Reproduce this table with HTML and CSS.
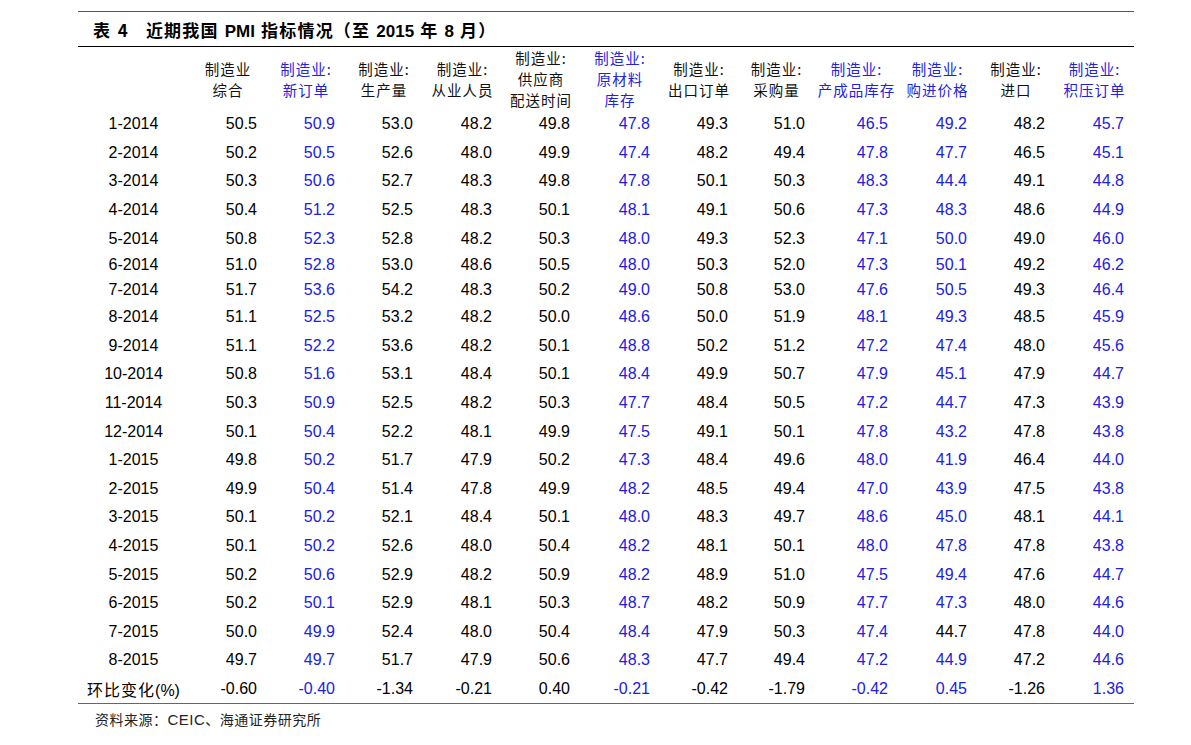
FILE: index.html
```html
<!DOCTYPE html>
<html lang="zh-CN">
<head>
<meta charset="utf-8">
<title>近期我国PMI指标情况</title>
<link rel="stylesheet" href="styles.css">
</head>
<body>
<div class="report">
  <div class="title"><span class="tnum">表 4</span><span class="ttext">近期我国 <b class="lat">PMI</b> 指标情况（至 <b class="lat">2015</b> 年 <b class="lat">8</b> 月）</span></div>
  <table class="pmi">
    <colgroup>
      <col class="c0"><col class="c78"><col class="c78"><col class="c78"><col class="c79"><col class="c78"><col class="c80"><col class="c78"><col class="c77"><col class="c83"><col class="c79"><col class="c78"><col class="c79">
    </colgroup>
    <thead>
      <tr>
        <th></th>
        <th>制造业<br>综合</th>
        <th class="b">制造业:<br>新订单</th>
        <th>制造业:<br>生产量</th>
        <th>制造业:<br>从业人员</th>
        <th>制造业:<br>供应商<br>配送时间</th>
        <th class="b">制造业:<br>原材料<br>库存</th>
        <th>制造业:<br>出口订单</th>
        <th>制造业:<br>采购量</th>
        <th class="b">制造业:<br>产成品库存</th>
        <th class="b">制造业:<br>购进价格</th>
        <th>制造业:<br>进口</th>
        <th class="b">制造业:<br>积压订单</th>
      </tr>
    </thead>
    <tbody id="rows"></tbody>
  </table>
  <div class="source">资料来源：<span class="lat">CEIC</span>、海通证券研究所</div>
</div>
<script src="app.js"></script>
</body>
</html>
```

FILE: styles.css
```css
html, body {
  margin: 0;
  padding: 0;
  background: #ffffff;
}
body {
  font-family: "Liberation Sans", Arial, "Noto Sans CJK SC", sans-serif;
  color: #000;
}
.report {
  margin: 11px 0 0 78px;
  width: 1056px;
}
.title {
  border-top: 1.3px solid #555;
  border-bottom: 1.4px solid #000;
  height: 36px;
  display: flex;
  align-items: center;
  font-family: "Noto Sans CJK SC", sans-serif;
  font-weight: 700;
  font-size: 17px;
  padding-left: 15px;
  box-sizing: border-box;
}
.title .tnum {
  margin-right: 18px;
  word-spacing: 4px;
}
.title .ttext {
  letter-spacing: 1.2px;
  word-spacing: 1px;
}
.lat {
  font-family: "Liberation Sans", Arial, sans-serif;
}
.title .ttext .lat {
  letter-spacing: 0;
}
.pmi {
  border-collapse: collapse;
  table-layout: fixed;
  width: 1056px;
  border-bottom: 1.3px solid #666;
}
.c0 { width: 111px; }
.c77 { width: 77px; }
.c78 { width: 78px; }
.c79 { width: 79px; }
.c80 { width: 80px; }
.c83 { width: 83px; }
.pmi th {
  height: 63px;
  padding: 0;
  font-family: "Noto Sans CJK SC", sans-serif;
  font-weight: 400;
  font-size: 14.5px;
  line-height: 21px;
  letter-spacing: 1px;
  text-align: center;
  vertical-align: middle;
  color: #111;
  white-space: nowrap;
}
.pmi th.b { color: #2222dd; }
.pmi td {
  height: 28.6px;
  padding: 0 10px 0 0;
  font-size: 16px;
  text-align: right;
  vertical-align: middle;
  white-space: nowrap;
}
.pmi tr.short td { height: 25px; }
.pmi td.lbl {
  text-align: center;
  padding: 0;
}
.pmi td.cn {
  font-family: "Noto Sans CJK SC", "Liberation Sans", sans-serif;
  letter-spacing: 1px;
}
.pmi td.cn .lat { font-family: "Liberation Sans", Arial, sans-serif; letter-spacing: 0; }
.pmi td.b { color: #2020e0; }
.pmi td.b.k { color: #000; }
.source {
  font-family: "Noto Sans CJK SC", sans-serif;
  font-size: 14px;
  color: #222;
  padding: 5px 0 0 17px;
  line-height: 20px;
  letter-spacing: 0.5px;
}
.source .lat { font-size: 15px; }
```

FILE: app.js
```js
var data = [
  ["1-2014", "50.5 50.9 53.0 48.2 49.8 47.8 49.3 51.0 46.5 49.2 48.2 45.7"],
  ["2-2014", "50.2 50.5 52.6 48.0 49.9 47.4 48.2 49.4 47.8 47.7 46.5 45.1"],
  ["3-2014", "50.3 50.6 52.7 48.3 49.8 47.8 50.1 50.3 48.3 44.4 49.1 44.8"],
  ["4-2014", "50.4 51.2 52.5 48.3 50.1 48.1 49.1 50.6 47.3 48.3 48.6 44.9"],
  ["5-2014", "50.8 52.3 52.8 48.2 50.3 48.0 49.3 52.3 47.1 50.0 49.0 46.0"],
  ["6-2014", "51.0 52.8 53.0 48.6 50.5 48.0 50.3 52.0 47.3 50.1 49.2 46.2", "short"],
  ["7-2014", "51.7 53.6 54.2 48.3 50.2 49.0 50.8 53.0 47.6 50.5 49.3 46.4", "short"],
  ["8-2014", "51.1 52.5 53.2 48.2 50.0 48.6 50.0 51.9 48.1 49.3 48.5 45.9"],
  ["9-2014", "51.1 52.2 53.6 48.2 50.1 48.8 50.2 51.2 47.2 47.4 48.0 45.6"],
  ["10-2014", "50.8 51.6 53.1 48.4 50.1 48.4 49.9 50.7 47.9 45.1 47.9 44.7"],
  ["11-2014", "50.3 50.9 52.5 48.2 50.3 47.7 48.4 50.5 47.2 44.7 47.3 43.9"],
  ["12-2014", "50.1 50.4 52.2 48.1 49.9 47.5 49.1 50.1 47.8 43.2 47.8 43.8"],
  ["1-2015", "49.8 50.2 51.7 47.9 50.2 47.3 48.4 49.6 48.0 41.9 46.4 44.0"],
  ["2-2015", "49.9 50.4 51.4 47.8 49.9 48.2 48.5 49.4 47.0 43.9 47.5 43.8"],
  ["3-2015", "50.1 50.2 52.1 48.4 50.1 48.0 48.3 49.7 48.6 45.0 48.1 44.1"],
  ["4-2015", "50.1 50.2 52.6 48.0 50.4 48.2 48.1 50.1 48.0 47.8 47.8 43.8"],
  ["5-2015", "50.2 50.6 52.9 48.2 50.9 48.2 48.9 51.0 47.5 49.4 47.6 44.7"],
  ["6-2015", "50.2 50.1 52.9 48.1 50.3 48.7 48.2 50.9 47.7 47.3 48.0 44.6"],
  ["7-2015", "50.0 49.9 52.4 48.0 50.4 48.4 47.9 50.3 47.4 44.7 47.8 44.0"],
  ["8-2015", "49.7 49.7 51.7 47.9 50.6 48.3 47.7 49.4 47.2 44.9 47.2 44.6"],
  ["环比变化(%)", "-0.60 -0.40 -1.34 -0.21 0.40 -0.21 -0.42 -1.79 -0.42 0.45 -1.26 1.36"]
];
var blue = [false, true, false, false, false, true, false, false, true, true, false, true];
var body = document.getElementById("rows");
data.forEach(function (r, ri) {
  var tr = document.createElement("tr");
  if (r[2]) tr.className = r[2];
  var th = document.createElement("td");
  th.className = "lbl" + (ri === data.length - 1 ? " cn" : "");
  if (ri === data.length - 1) {
    th.innerHTML = '环比变化<span class="lat">(%)</span>';
  } else {
    th.textContent = r[0];
  }
  tr.appendChild(th);
  r[1].split(" ").forEach(function (v, i) {
    var td = document.createElement("td");
    var cls = blue[i] ? "b" : "";
    if (r[0] === "7-2015" && i === 9) cls += " k";
    td.className = cls;
    td.textContent = v;
    tr.appendChild(td);
  });
  body.appendChild(tr);
});
```
